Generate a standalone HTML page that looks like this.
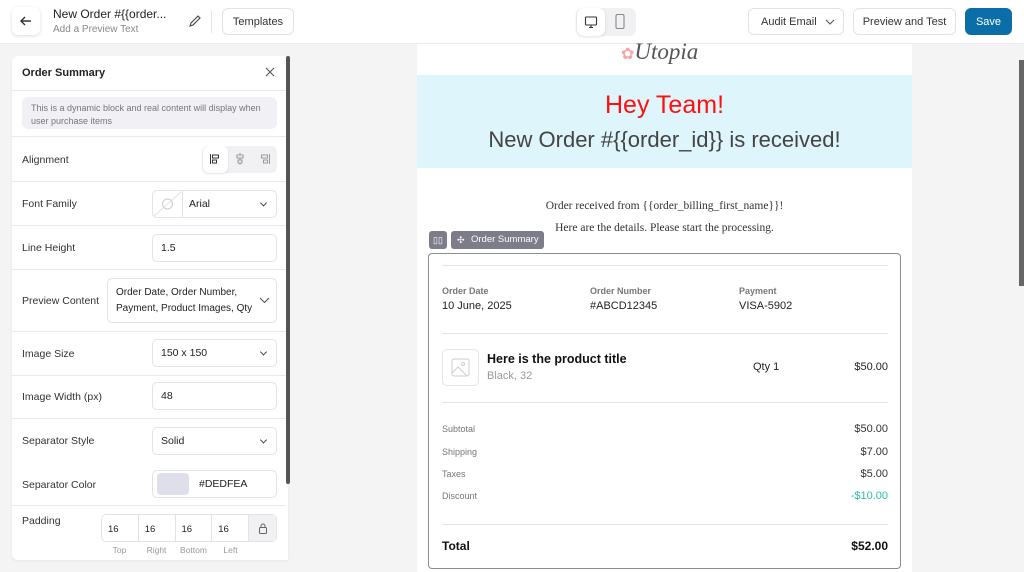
<!DOCTYPE html>
<html><head><meta charset="utf-8"><style>
*{box-sizing:border-box;margin:0;padding:0}
body{width:1024px;height:572px;overflow:hidden;background:#f4f4f5;font-family:"Liberation Sans",Arial,sans-serif;position:relative;color:#222}
.abs{position:absolute}
.top{left:0;top:0;width:1024px;height:44px;background:#fff;border-bottom:1px solid #e8e8ee}
.btn{position:absolute;border:1px solid #e2e2ea;border-radius:6px;background:#fff;font-size:11px;color:#333;display:flex;align-items:center;justify-content:center}
.panel{left:12px;top:56px;width:276px;height:504px;background:#fff;border-radius:6px 0 0 6px;box-shadow:0 1px 3px rgba(0,0,0,.06)}
.row{position:absolute;left:0;width:274px;border-bottom:1px solid #e8e8f0}
.lbl{position:absolute;left:10px;font-size:10.5px;color:#333}
.inp{position:absolute;border:1px solid #e2e2ea;border-radius:5px;background:#fff;font-size:10.5px;color:#222;padding-left:8px;display:flex;align-items:center}
.chev{position:absolute;right:10px;top:50%;width:5px;height:5px;border-right:1.3px solid #444;border-bottom:1.3px solid #444;transform:translateY(-70%) rotate(45deg)}
.canvas{left:417px;top:44px;width:495px;height:528px;background:#fff}
.os{left:428px;top:253px;width:473px;height:316px;border:1.5px solid #8a8a98;border-radius:4px}
.hr{position:absolute;left:13px;width:446px;height:1px;background:#e3e3ee}
.s{position:absolute;font-size:9px;color:#777}
.v{position:absolute;font-size:11px;color:#222}
</style></head><body>
<div class="abs top"></div>
<div class="btn" style="left:12px;top:7px;width:28px;height:28px;border:none;box-shadow:0 1px 3px rgba(0,0,0,.15)"><svg width="14" height="14" viewBox="0 0 14 14"><path d="M12 7H2M6 3L2 7l4 4" fill="none" stroke="#333" stroke-width="1.4"/></svg></div>
<div class="abs" style="left:53px;top:7px;font-size:12px;color:#222">New Order #{{order...</div>
<div class="abs" style="left:53px;top:24px;font-size:10px;color:#888">Add a Preview Text</div>
<svg class="abs" style="left:188px;top:14px" width="14" height="14" viewBox="0 0 14 14"><path d="M2 12l1-3 7-7 2 2-7 7z" fill="none" stroke="#444" stroke-width="1.1"/></svg>
<div class="abs" style="left:211px;top:11px;width:1px;height:22px;background:#e2e2ea"></div>
<div class="btn" style="left:222px;top:8px;width:72px;height:27px">Templates</div>
<div class="abs" style="left:576px;top:8px;width:60px;height:28px;background:#f1f1f4;border-radius:7px"></div>
<div class="abs" style="left:577px;top:8px;width:28px;height:28px;background:#fff;border-radius:7px;box-shadow:0 1px 3px rgba(0,0,0,.12)"></div>
<svg class="abs" style="left:584px;top:15px" width="14" height="14" viewBox="0 0 14 14"><rect x="1.5" y="2" width="11" height="8" rx="1" fill="none" stroke="#333" stroke-width="1.1"/><path d="M5 12.5h4M7 10v2.5" stroke="#333" stroke-width="1.1"/></svg>
<svg class="abs" style="left:614px;top:13px" width="12" height="18" viewBox="0 0 12 18"><rect x="2" y="1.5" width="8" height="14" rx="1.5" fill="none" stroke="#888" stroke-width="1.1"/></svg>
<div class="btn" style="left:748px;top:8px;width:96px;height:27px;justify-content:flex-start;padding-left:12px">Audit Email<svg style="margin-left:8px" width="10" height="6" viewBox="0 0 10 6"><path d="M1 1l4 4 4-4" fill="none" stroke="#555" stroke-width="1.1"/></svg></div>
<div class="btn" style="left:853px;top:8px;width:103px;height:27px">Preview and Test</div>
<div class="btn" style="left:965px;top:8px;width:47px;height:27px;background:#0b6ea8;border-color:#0b6ea8;color:#fff">Save</div>

<div class="abs panel">
 <div class="row" style="top:0;height:35px"></div>
 <div class="lbl" style="top:11px;font-size:11px;font-weight:bold;color:#222">Order Summary</div>
 <svg class="abs" style="left:253px;top:11px" width="10" height="10" viewBox="0 0 10 10"><path d="M1 1l8 8M9 1l-8 8" stroke="#555" stroke-width="1.1"/></svg>
 <div class="abs" style="left:10px;top:41px;width:255px;height:32px;background:#f0f0f5;border-radius:6px;font-size:9px;color:#777;padding:5px 9px;line-height:13px">This is a dynamic block and real content will display when user purchase items</div>
 <div class="row" style="top:80px;height:1px"></div>
 <div class="row" style="top:81px;height:45px"></div>
 <div class="lbl" style="top:98px">Alignment</div>
 <div class="abs" style="left:190px;top:90px;width:75px;height:27px;background:#f1f1f4;border-radius:6px"></div>
 <div class="abs" style="left:191px;top:90px;width:25px;height:27px;background:#fff;border-radius:6px;box-shadow:0 1px 2px rgba(0,0,0,.12)"></div>
 <svg class="abs" style="left:197px;top:97px" width="12" height="12" viewBox="0 0 12 12"><path d="M1.5 1v10" stroke="#333"/><rect x="3.5" y="2" width="6" height="3" fill="none" stroke="#333"/><rect x="3.5" y="7" width="4" height="3" fill="none" stroke="#333"/></svg>
 <svg class="abs" style="left:222px;top:97px" width="12" height="12" viewBox="0 0 12 12"><rect x="3" y="2" width="6" height="3" fill="none" stroke="#999"/><rect x="4" y="7" width="4" height="3" fill="none" stroke="#999"/><path d="M6 0v2M6 5v2M6 10v2" stroke="#999"/></svg>
 <svg class="abs" style="left:247px;top:97px" width="12" height="12" viewBox="0 0 12 12"><path d="M10.5 1v10" stroke="#999"/><rect x="2.5" y="2" width="6" height="3" fill="none" stroke="#999"/><rect x="4.5" y="7" width="4" height="3" fill="none" stroke="#999"/></svg>
 <div class="row" style="top:126px;height:44px"></div>
 <div class="lbl" style="top:142px">Font Family</div>
 <div class="inp" style="left:140px;top:134px;width:125px;height:28px;padding-left:36px">Arial<span class="chev"></span></div>
 <div class="abs" style="left:170px;top:135px;width:1px;height:26px;background:#e2e2ea"></div>
 <svg class="abs" style="left:141px;top:135px" width="29" height="26" viewBox="0 0 29 26"><path d="M1 25L28 1" stroke="#e2e2ea"/><circle cx="14.5" cy="13" r="5" fill="none" stroke="#ccc"/></svg>
 <div class="row" style="top:170px;height:44px"></div>
 <div class="lbl" style="top:186px">Line Height</div>
 <div class="inp" style="left:140px;top:178px;width:125px;height:28px">1.5</div>
 <div class="row" style="top:214px;height:62px"></div>
 <div class="lbl" style="top:239px">Preview Content</div>
 <div class="inp" style="left:95px;top:222px;width:170px;height:45px;line-height:16px;font-size:10px">Order Date, Order Number, Payment, Product Images, Qty<svg style="position:absolute;right:6px;top:18px" width="11" height="7" viewBox="0 0 11 7"><path d="M1 1l4.5 4.5L10 1" fill="none" stroke="#555" stroke-width="1.1"/></svg></div>
 <div class="row" style="top:276px;height:44px"></div>
 <div class="lbl" style="top:292px">Image Size</div>
 <div class="inp" style="left:140px;top:283px;width:125px;height:28px">150 x 150<span class="chev"></span></div>
 <div class="row" style="top:320px;height:43px"></div>
 <div class="lbl" style="top:335px">Image Width (px)</div>
 <div class="inp" style="left:140px;top:326px;width:125px;height:28px">48</div>
 <div class="lbl" style="top:379px">Separator Style</div>
 <div class="inp" style="left:140px;top:371px;width:125px;height:28px">Solid<span class="chev"></span></div>
 <div class="lbl" style="top:423px">Separator Color</div>
 <div class="inp" style="left:140px;top:414px;width:125px;height:28px;padding-left:4px"><span style="width:32px;height:22px;background:#dedfea;border-radius:4px;margin-right:10px"></span>#DEDFEA</div>
 <div class="row" style="top:449px;height:1px"></div>
 <div class="lbl" style="top:459px">Padding</div>
 <div class="abs" style="left:89px;top:458px;width:176px;height:28px;border:1px solid #e2e2ea;border-radius:5px;display:flex;font-size:9.5px">
  <div style="flex:1;border-right:1px solid #e2e2ea;padding:9px 6px">16</div><div style="flex:1;border-right:1px solid #e2e2ea;padding:9px 6px">16</div><div style="flex:1;border-right:1px solid #e2e2ea;padding:9px 6px">16</div><div style="flex:1;border-right:1px solid #e2e2ea;padding:9px 6px">16</div>
  <div style="width:27px;background:#f1f1f4;display:flex;align-items:center;justify-content:center"><svg width="10" height="11" viewBox="0 0 10 11"><rect x="1.5" y="4.5" width="7" height="6" rx="1" fill="none" stroke="#666"/><path d="M3 4.5V3a2 2 0 014 0v1.5" fill="none" stroke="#666"/></svg></div>
 </div>
 <div class="abs" style="left:89px;top:489px;width:150px;display:flex;font-size:8.5px;color:#999"><span style="width:37px;text-align:center">Top</span><span style="width:37px;text-align:center">Right</span><span style="width:37px;text-align:center">Bottom</span><span style="width:37px;text-align:center">Left</span></div>
</div>
<div class="abs" style="left:286px;top:56px;width:4px;height:428px;background:#555;border-radius:2px"></div>
<div class="abs" style="left:1019px;top:60px;width:5px;height:226px;background:#666"></div>

<div class="abs canvas"></div>
<div class="abs" style="left:621px;top:39px;font-family:'Liberation Serif',serif;font-style:italic;font-size:23px;color:#555"><span style="color:#f4a6a8;font-style:normal;font-size:16px">✿</span>Utopia</div>
<div class="abs" style="left:417px;top:75px;width:495px;height:93px;background:#def5fb"></div>
<div class="abs" style="left:417px;top:91px;width:495px;text-align:center;font-size:25px;color:#ff1010">Hey Team!</div>
<div class="abs" style="left:417px;top:127px;width:495px;text-align:center;font-size:22px;color:#444">New Order #{{order_id}} is received!</div>
<div class="abs" style="left:417px;top:200px;width:495px;text-align:center;font-family:'Liberation Serif',serif;font-size:11.5px;color:#333">Order received from {{order_billing_first_name}}!</div>
<div class="abs" style="left:417px;top:222px;width:495px;text-align:center;font-family:'Liberation Serif',serif;font-size:11.5px;color:#333">Here are the details. Please start the processing.</div>
<div class="abs" style="left:429px;top:231px;width:18px;height:18px;background:#7c7c8a;border-radius:3px;color:#fff;font-size:9px;text-align:center;line-height:18px">▯▯</div>
<div class="abs" style="left:451px;top:231px;width:93px;height:18px;background:#7c7c8a;border-radius:3px;color:#fff;font-size:9.5px;line-height:18px;padding-left:20px">Order Summary</div>
<div class="abs" style="left:457px;top:231px;color:#fff;font-size:9px;line-height:18px">✣</div>

<div class="abs os">
 <div class="hr" style="top:11px"></div>
 <div class="s" style="left:13px;top:32px;font-weight:bold">Order Date</div>
 <div class="v" style="left:13px;top:46px">10 June, 2025</div>
 <div class="s" style="left:161px;top:32px;font-weight:bold">Order Number</div>
 <div class="v" style="left:161px;top:46px">#ABCD12345</div>
 <div class="s" style="left:310px;top:32px;font-weight:bold">Payment</div>
 <div class="v" style="left:310px;top:46px">VISA-5902</div>
 <div class="hr" style="top:79px"></div>
 <div class="abs" style="left:13px;top:95px;width:37px;height:37px;border:1px solid #e3e3ee;border-radius:5px"></div>
 <svg class="abs" style="left:22px;top:104px" width="19" height="19" viewBox="0 0 19 19"><rect x="1" y="1" width="17" height="17" rx="2" fill="none" stroke="#ccc"/><circle cx="12" cy="6" r="1.5" fill="none" stroke="#ccc"/><path d="M1 15l6-6 9 9" fill="none" stroke="#ccc"/></svg>
 <div class="abs" style="left:58px;top:98px;font-size:12.5px;font-weight:bold;color:#111">Here is the product title</div>
 <div class="abs" style="left:58px;top:116px;font-size:11px;color:#999">Black, 32</div>
 <div class="v" style="left:324px;top:107px">Qty 1</div>
 <div class="v" style="right:12px;top:107px">$50.00</div>
 <div class="hr" style="top:148px"></div>
 <div class="s" style="left:13px;top:170px">Subtotal</div><div class="v" style="right:12px;top:169px;color:#333">$50.00</div>
 <div class="s" style="left:13px;top:193px">Shipping</div><div class="v" style="right:12px;top:192px;color:#333">$7.00</div>
 <div class="s" style="left:13px;top:215px">Taxes</div><div class="v" style="right:12px;top:214px;color:#333">$5.00</div>
 <div class="s" style="left:13px;top:237px">Discount</div><div class="v" style="right:12px;top:236px;color:#2bbfa8">-$10.00</div>
 <div class="hr" style="top:270px"></div>
 <div class="abs" style="left:13px;top:285px;font-size:12px;font-weight:bold;color:#111">Total</div>
 <div class="abs" style="right:12px;top:285px;font-size:12px;font-weight:bold;color:#111">$52.00</div>
</div>
</body></html>
